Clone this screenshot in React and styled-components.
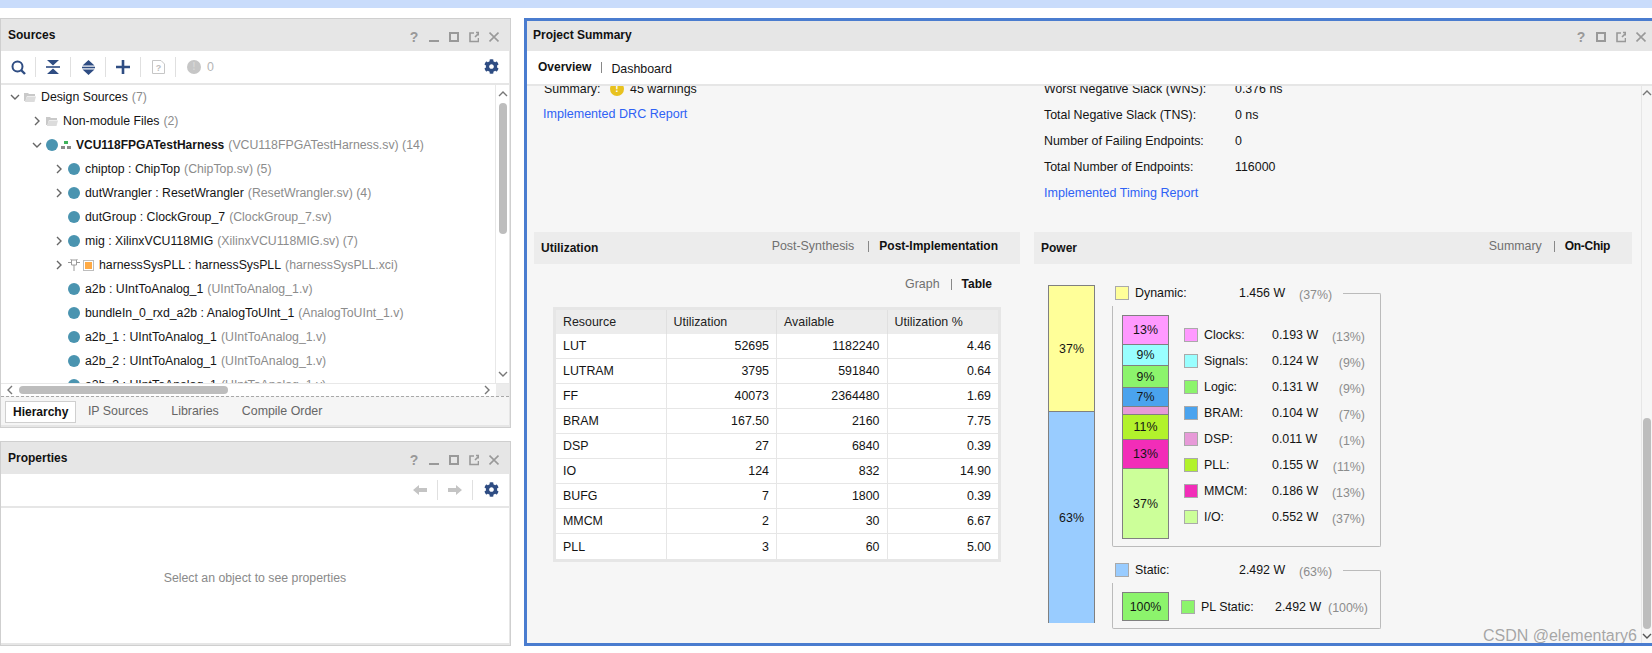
import React from 'react';
import styled, { createGlobalStyle } from 'styled-components';
import { FaCog } from 'react-icons/fa';

const NAVY = '#2f4d83';
const GREY_TEXT = '#8c8c8c';

const sourceRows = [
  { level: 0, open: true, icon: 'folder', name: 'Design Sources', note: '(7)' },
  { level: 1, arrow: true, icon: 'folder', name: 'Non-module Files', note: '(2)' },
  { level: 1, open: true, icon: 'top', name: 'VCU118FPGATestHarness', note: '(VCU118FPGATestHarness.sv) (14)', bold: true },
  { level: 2, arrow: true, icon: 'dot', name: 'chiptop : ChipTop', note: '(ChipTop.sv) (5)' },
  { level: 2, arrow: true, icon: 'dot', name: 'dutWrangler : ResetWrangler', note: '(ResetWrangler.sv) (4)' },
  { level: 2, icon: 'dot', name: 'dutGroup : ClockGroup_7', note: '(ClockGroup_7.sv)' },
  { level: 2, arrow: true, icon: 'dot', name: 'mig : XilinxVCU118MIG', note: '(XilinxVCU118MIG.sv) (7)' },
  { level: 2, arrow: true, icon: 'ip', name: 'harnessSysPLL : harnessSysPLL', note: '(harnessSysPLL.xci)' },
  { level: 2, icon: 'dot', name: 'a2b : UIntToAnalog_1', note: '(UIntToAnalog_1.v)' },
  { level: 2, icon: 'dot', name: 'bundleIn_0_rxd_a2b : AnalogToUInt_1', note: '(AnalogToUInt_1.v)' },
  { level: 2, icon: 'dot', name: 'a2b_1 : UIntToAnalog_1', note: '(UIntToAnalog_1.v)' },
  { level: 2, icon: 'dot', name: 'a2b_2 : UIntToAnalog_1', note: '(UIntToAnalog_1.v)' },
  { level: 2, icon: 'dot', name: 'a2b_3 : UIntToAnalog_1', note: '(UIntToAnalog_1.v)' },
];

const timingRows = [
  ['Worst Negative Slack (WNS):', '0.376 ns'],
  ['Total Negative Slack (TNS):', '0 ns'],
  ['Number of Failing Endpoints:', '0'],
  ['Total Number of Endpoints:', '116000'],
];

const utilRows = [
  ['LUT', '52695', '1182240', '4.46'],
  ['LUTRAM', '3795', '591840', '0.64'],
  ['FF', '40073', '2364480', '1.69'],
  ['BRAM', '167.50', '2160', '7.75'],
  ['DSP', '27', '6840', '0.39'],
  ['IO', '124', '832', '14.90'],
  ['BUFG', '7', '1800', '0.39'],
  ['MMCM', '2', '30', '6.67'],
  ['PLL', '3', '60', '5.00'],
];

const dynamicParts = [
  { label: 'Clocks:', value: '0.193 W', pct: '13%', color: '#ff99ff', height: 29 },
  { label: 'Signals:', value: '0.124 W', pct: '9%', color: '#99ffff', height: 21 },
  { label: 'Logic:', value: '0.131 W', pct: '9%', color: '#8cf46c', height: 22 },
  { label: 'BRAM:', value: '0.104 W', pct: '7%', color: '#4aa3ee', height: 19 },
  { label: 'DSP:', value: '0.011 W', pct: '1%', color: '#e79ad8', height: 8, hideText: true },
  { label: 'PLL:', value: '0.155 W', pct: '11%', color: '#b2f22c', height: 25 },
  { label: 'MMCM:', value: '0.186 W', pct: '13%', color: '#f22db8', height: 29 },
  { label: 'I/O:', value: '0.552 W', pct: '37%', color: '#ccff99', height: 69 },
];

function Chevron({ dir = 'right', color = '#666', size = 10 }) {
  const points = {
    right: '3,1 7,5 3,9',
    left: '7,1 3,5 7,9',
    down: '1,3 5,7 9,3',
    up: '1,7 5,3 9,7',
  };
  return (
    <svg width={size} height={size} viewBox="0 0 10 10">
      <polyline points={points[dir]} fill="none" stroke={color} strokeWidth="1.4" />
    </svg>
  );
}

function WindowControls({ hideMinimize }) {
  return (
    <Controls>
      <Help>?</Help>
      {!hideMinimize && (
        <svg width="10" height="12" viewBox="0 0 10 12">
          <rect x="0" y="9" width="10" height="2" fill="#999" />
        </svg>
      )}
      <svg width="10" height="12" viewBox="0 0 10 12">
        <rect x="1" y="2" width="8" height="8" fill="none" stroke="#999" strokeWidth="2" />
      </svg>
      <svg width="10" height="12" viewBox="0 0 10 12">
        <path d="M5 2H1V10.500H9.500V7M6 6L10 2M7 1.500H10V4.500" fill="none" stroke="#999" strokeWidth="1.600" />
      </svg>
      <svg width="10" height="12" viewBox="0 0 10 12">
        <path d="M0.500 1.500L9.500 10.500M9.500 1.500L0.500 10.500" fill="none" stroke="#999" strokeWidth="1.700" />
      </svg>
    </Controls>
  );
}

function TreeIcon({ kind }) {
  if (kind === 'folder') {
    return (
      <IconSlot>
        <svg width="12" height="10" viewBox="0 0 12 10">
          <path d="M0 1H4L5 2H11V4H3L1.500 9H0Z" fill="#c9c9c9" />
          <path d="M3 4.500H12L10.500 10H0.800Z" fill="#dcdcdc" />
        </svg>
      </IconSlot>
    );
  }
  if (kind === 'top') {
    return (
      <>
        <Dot />
        <HierIcon>
          <svg width="10" height="8" viewBox="0 0 10 8">
            <rect x="3" y="0" width="4" height="3" fill="#3fb35c" />
            <rect x="0" y="5" width="4" height="3" fill="#8a8a8a" />
            <rect x="6" y="5" width="4" height="3" fill="#8a8a8a" />
          </svg>
        </HierIcon>
      </>
    );
  }
  if (kind === 'ip') {
    return (
      <>
        <IconSlot>
          <svg width="12" height="12" viewBox="0 0 12 12">
            <path d="M0 3.500H3M9 3.500H12M3.500 1H8.500V6H3.500ZM6 6V12M3 0V1M9 0V1" fill="none" stroke="#9a9a9a" strokeWidth="1" />
          </svg>
        </IconSlot>
        <IpBox />
      </>
    );
  }
  return <Dot />;
}

function TreeRow({ row }) {
  return (
    <Row $level={row.level}>
      <ArrowSlot>
        {row.open && <Chevron dir="down" />}
        {row.arrow && <Chevron dir="right" />}
      </ArrowSlot>
      <TreeIcon kind={row.icon} />
      <RowName $bold={row.bold}>{row.name}</RowName>
      <RowNote>{row.note}</RowNote>
    </Row>
  );
}

function SourcesPanel() {
  return (
    <Panel $height={410}>
      <PanelHeader>
        <PanelTitle>Sources</PanelTitle>
        <WindowControls />
      </PanelHeader>
      <Toolbar>
        <Tool>
          <svg width="15" height="15" viewBox="0 0 15 15">
            <circle cx="6.500" cy="6.500" r="5" fill="none" stroke={NAVY} strokeWidth="2" />
            <path d="M10 10L14 14" stroke={NAVY} strokeWidth="2.400" />
          </svg>
        </Tool>
        <Tool>
          <svg width="14" height="14" viewBox="0 0 14 14">
            <path d="M1 0H13L7 5.500ZM1 14H13L7 8.500Z" fill={NAVY} />
            <rect x="0" y="6.200" width="14" height="1.600" fill={NAVY} />
          </svg>
        </Tool>
        <Tool>
          <svg width="13" height="15" viewBox="0 0 13 15">
            <path d="M6.500 0L12.500 5.500H0.500ZM6.500 15L12.500 9.500H0.500Z" fill={NAVY} />
            <rect x="0" y="6.700" width="13" height="1.600" fill={NAVY} />
          </svg>
        </Tool>
        <Tool>
          <svg width="14" height="14" viewBox="0 0 14 14">
            <path d="M5.700 0H8.300V5.700H14V8.300H8.300V14H5.700V8.300H0V5.700H5.700Z" fill={NAVY} />
          </svg>
        </Tool>
        <Tool>
          <svg width="13" height="14" viewBox="0 0 13 14">
            <path d="M0.500 0.500H9L12.500 4V13.500H0.500Z" fill="none" stroke="#c6c6c6" />
            <text x="6.500" y="10.500" fontSize="9" fontFamily="Liberation Sans" fontWeight="700" fill="#bdbdbd" textAnchor="middle">?</text>
          </svg>
        </Tool>
        <IssueCount>
          <IssueDot>!</IssueDot>
          0
        </IssueCount>
        <ToolSpring />
        <GearTool><FaCog size={15} color={NAVY} /></GearTool>
      </Toolbar>
      <Rule />
      <TreeArea>
        <TreeList>
          {sourceRows.map(row => (
            <TreeRow key={row.name} row={row} />
          ))}
        </TreeList>
        <VerticalBar>
          <ArrowCell><Chevron dir="up" color="#777" /></ArrowCell>
          <TreeThumb />
          <Spring />
          <ArrowCell><Chevron dir="down" color="#777" /></ArrowCell>
        </VerticalBar>
      </TreeArea>
      <HorizontalBar>
        <HorizontalEnd><Chevron dir="left" color="#777" /></HorizontalEnd>
        <HorizontalThumb />
        <Spring />
        <HorizontalEnd><Chevron dir="right" color="#777" /></HorizontalEnd>
        <ScrollCorner />
      </HorizontalBar>
      <TabStrip>
        <SideTab $active>Hierarchy</SideTab>
        <SideTab>IP Sources</SideTab>
        <SideTab>Libraries</SideTab>
        <SideTab>Compile Order</SideTab>
      </TabStrip>
    </Panel>
  );
}

function PropertiesPanel() {
  return (
    <Panel $height={205}>
      <PanelHeader>
        <PanelTitle>Properties</PanelTitle>
        <WindowControls />
      </PanelHeader>
      <NavToolbar>
        <NavTool>
          <svg width="14" height="10" viewBox="0 0 14 10">
            <path d="M0 5L6 0V3H14V7H6V10Z" fill="#c4c4c4" />
          </svg>
        </NavTool>
        <NavTool>
          <svg width="14" height="10" viewBox="0 0 14 10">
            <path d="M14 5L8 0V3H0V7H8V10Z" fill="#c4c4c4" />
          </svg>
        </NavTool>
        <GearTool><FaCog size={15} color={NAVY} /></GearTool>
      </NavToolbar>
      <Rule />
      <EmptyState>Select an object to see properties</EmptyState>
    </Panel>
  );
}

function PowerGroup({ name, value, pct, color, children }) {
  return (
    <PowerBlock>
      <GroupHead>
        <GroupSwatch $color={color} />
        <GroupLabel>{name}</GroupLabel>
        <GroupValue>{value}</GroupValue>
        <GroupPct>({pct})</GroupPct>
        <GroupLine />
      </GroupHead>
      <GroupBox>{children}</GroupBox>
    </PowerBlock>
  );
}

function PowerChart() {
  return (
    <ChartWrap>
      <TotalBar>
        <TotalPart $color="#ffff99" $height={126}>37%</TotalPart>
        <TotalPart $color="#99ccff" $height={211}>63%</TotalPart>
      </TotalBar>
      <PowerColumn>
        <PowerGroup name="Dynamic:" value="1.456 W" pct="37%" color="#ffff99">
          <StackBar>
            {dynamicParts.map(part => (
              <StackPart key={part.label} $color={part.color} $height={part.height}>
                {!part.hideText && part.pct}
              </StackPart>
            ))}
          </StackBar>
          <LegendGrid>
            {dynamicParts.map(part => (
              <React.Fragment key={part.label}>
                <LegendSwatch $color={part.color} />
                <span>{part.label}</span>
                <LegendValue>{part.value}</LegendValue>
                <LegendPct>({part.pct})</LegendPct>
              </React.Fragment>
            ))}
          </LegendGrid>
        </PowerGroup>
        <PowerGroup name="Static:" value="2.492 W" pct="63%" color="#99ccff">
          <StaticBar>100%</StaticBar>
          <StaticLegend>
            <LegendSwatch $color="#8cf46c" />
            <StaticLabel>PL Static:</StaticLabel>
            <StaticValue>2.492 W</StaticValue>
            <StaticPct>(100%)</StaticPct>
          </StaticLegend>
        </PowerGroup>
      </PowerColumn>
    </ChartWrap>
  );
}

function ProjectSummary() {
  return (
    <MainPanel>
      <MainHeader>
        <PanelTitle>Project Summary</PanelTitle>
        <WindowControls hideMinimize />
      </MainHeader>
      <ViewTabs>
        <OverviewTab>Overview</OverviewTab>
        <TabDivider />
        <DashboardTab>Dashboard</DashboardTab>
      </ViewTabs>
      <Rule />
      <MainBody>
        <SummaryScroll>
          <SummaryGrid>
            <TopBlock $inset={9}>
              <StatusRow>
                <StatusLabel>Summary:</StatusLabel>
                <WarnDot>!</WarnDot>
                <span>45 warnings</span>
              </StatusRow>
              <ReportLink>Implemented DRC Report</ReportLink>
            </TopBlock>
            <TopBlock $inset={10}>
              {timingRows.map(([label, value]) => (
                <TimingRow key={label}>
                  <TimingLabel>{label}</TimingLabel>
                  <span>{value}</span>
                </TimingRow>
              ))}
              <ReportLink>Implemented Timing Report</ReportLink>
            </TopBlock>
            <div>
              <SectionHead>
                <SectionTitle>Utilization</SectionTitle>
                <SectionSwitch>
                  <SwitchItem>Post-Synthesis</SwitchItem>
                  <SwitchDivider $left={14} />
                  <SwitchItem $active>Post-Implementation</SwitchItem>
                </SectionSwitch>
              </SectionHead>
              <GraphSwitch>
                <SwitchItem>Graph</SwitchItem>
                <SwitchDivider $left={11} />
                <SwitchItem $active>Table</SwitchItem>
              </GraphSwitch>
              <UtilTable>
                <thead>
                  <tr>
                    <HeadCell>Resource</HeadCell>
                    <HeadCell>Utilization</HeadCell>
                    <HeadCell>Available</HeadCell>
                    <HeadCell>Utilization %</HeadCell>
                  </tr>
                </thead>
                <tbody>
                  {utilRows.map(row => (
                    <tr key={row[0]}>
                      <BodyCell>{row[0]}</BodyCell>
                      <BodyCell $right>{row[1]}</BodyCell>
                      <BodyCell $right>{row[2]}</BodyCell>
                      <BodyCell $right>{row[3]}</BodyCell>
                    </tr>
                  ))}
                </tbody>
              </UtilTable>
            </div>
            <div>
              <SectionHead>
                <SectionTitle>Power</SectionTitle>
                <SectionSwitch>
                  <SwitchItem>Summary</SwitchItem>
                  <SwitchDivider $left={12} />
                  <SwitchItem $active $tight>On-Chip</SwitchItem>
                </SectionSwitch>
              </SectionHead>
              <PowerChart />
            </div>
          </SummaryGrid>
        </SummaryScroll>
        <MainScrollBar>
          <MainArrow><Chevron dir="up" color="#777" /></MainArrow>
          <Spring />
          <MainThumb />
          <MainArrow><Chevron dir="down" color="#555" /></MainArrow>
        </MainScrollBar>
      </MainBody>
      <Watermark>CSDN @elementary6</Watermark>
    </MainPanel>
  );
}

export default function App() {
  return (
    <>
      <GlobalStyle />
      <TopStrip />
      <Workspace>
        <LeftColumn>
          <SourcesPanel />
          <PropertiesPanel />
        </LeftColumn>
        <ProjectSummary />
      </Workspace>
    </>
  );
}

const GlobalStyle = createGlobalStyle`
  html, body {
    margin: 0;
    padding: 0;
    background: #fff;
  }

  body {
    font-family: "Liberation Sans", Arial, sans-serif;
    font-size: 12.4px;
    color: #141414;
    overflow: hidden;
  }

  * {
    box-sizing: border-box;
  }
`;

const TopStrip = styled.div`
  height: 8px;
  background: #c9dcfb;
`;

const Workspace = styled.div`
  display: flex;
  gap: 13px;
  padding-top: 10px;
`;

const LeftColumn = styled.div`
  display: flex;
  flex-direction: column;
  gap: 13px;
  width: 511px;
  flex: none;
`;

const Panel = styled.section`
  display: flex;
  flex-direction: column;
  height: ${props => props.$height}px;
  padding: 0 1px 2px 0;
  background: #e6e6e6;
  border: 1px solid #cfcfcf;
  overflow: hidden;
`;

const PanelHeader = styled.header`
  display: flex;
  align-items: center;
  justify-content: space-between;
  flex: none;
  height: 32px;
  padding: 0 10px 0 7px;
`;

const PanelTitle = styled.h2`
  margin: 0;
  font-size: 12px;
  font-weight: 700;
  color: #111;
`;

const Controls = styled.div`
  display: flex;
  align-items: center;
  gap: 10px;
  margin-top: 4px;
`;

const Help = styled.span`
  width: 10px;
  font-size: 14px;
  font-weight: 700;
  line-height: 12px;
  text-align: center;
  color: #999;
`;

const Toolbar = styled.div`
  display: flex;
  align-items: center;
  flex: none;
  height: 32px;
  background: #fff;
`;

const Tool = styled.div`
  display: flex;
  align-items: center;
  justify-content: center;
  width: 35px;
  height: 20px;
  border-right: 1px solid #e0e0e0;
`;

const ToolSpring = styled.div`
  flex: 1;
`;

const GearTool = styled.div`
  display: flex;
  width: 36px;
  height: 16px;
  padding-left: 11px;
`;

const IssueCount = styled.div`
  display: flex;
  align-items: center;
  gap: 6px;
  margin-left: 11px;
  color: #b5b5b5;
`;

const IssueDot = styled.span`
  width: 14px;
  height: 14px;
  border-radius: 50%;
  background: #c6c6c6;
  color: #d6d6d6;
  font-size: 10px;
  font-weight: 700;
  line-height: 14px;
  text-align: center;
`;

const Rule = styled.div`
  flex: none;
  height: 2px;
  background: #e6e6e6;
`;

const TreeArea = styled.div`
  display: flex;
  flex: none;
  height: 298px;
  background: #fff;
`;

const TreeList = styled.div`
  flex: 1;
  min-width: 0;
  overflow: hidden;
`;

const Row = styled.div`
  display: flex;
  align-items: center;
  height: 24px;
  padding-left: ${props => 9 + props.$level * 22}px;
  font-size: 12.3px;
  white-space: nowrap;
`;

const ArrowSlot = styled.span`
  display: flex;
  width: 14px;
  flex: none;
`;

const IconSlot = styled.span`
  display: flex;
  align-items: center;
  width: 12px;
  flex: none;
`;

const Dot = styled.span`
  width: 12px;
  height: 12px;
  flex: none;
  border-radius: 50%;
  background: #4a94b0;
`;

const HierIcon = styled.span`
  display: flex;
  margin-left: 3px;
`;

const IpBox = styled.span`
  width: 11px;
  height: 11px;
  margin-left: 3px;
  flex: none;
  background: #ffaa44;
  border: 1px solid #bdbdbd;
  outline: 1px solid #fff;
  outline-offset: -2px;
`;

const RowName = styled.span`
  margin-left: 5px;
  font-weight: ${props => (props.$bold ? 700 : 400)};
  font-size: ${props => (props.$bold ? '12px' : 'inherit')};
`;

const RowNote = styled.span`
  margin-left: 4px;
  color: ${GREY_TEXT};
`;

const VerticalBar = styled.div`
  display: flex;
  flex-direction: column;
  align-items: center;
  width: 14px;
  flex: none;
  border-left: 1px solid #e8e8e8;
`;

const ArrowCell = styled.div`
  display: flex;
  align-items: center;
  justify-content: center;
  height: 18px;
  flex: none;
`;

const TreeThumb = styled.div`
  width: 8px;
  height: 131px;
  border-radius: 4px;
  background: #bdbdbd;
`;

const Spring = styled.div`
  flex: 1;
`;

const HorizontalBar = styled.div`
  display: flex;
  align-items: center;
  flex: none;
  height: 13px;
  background: #fff;
  border-top: 1px solid #e8e8e8;
`;

const HorizontalEnd = styled.div`
  display: flex;
  justify-content: center;
  width: 18px;
  flex: none;
`;

const HorizontalThumb = styled.div`
  width: 209px;
  height: 8px;
  border-radius: 4px;
  background: #bdbdbd;
`;

const ScrollCorner = styled.div`
  align-self: stretch;
  width: 13px;
  flex: none;
  background: #ececec;
`;

const TabStrip = styled.nav`
  display: flex;
  align-items: center;
  flex: 1;
  padding: 1px 0 0 4px;
  background: #f5f5f5;
  border-top: 1px dashed #a8a8a8;
`;

const SideTab = styled.div`
  padding: 0 ${props => (props.$active ? '7px' : '11.5px')};
  height: 22px;
  line-height: 20px;
  font-size: ${props => (props.$active ? '12px' : '12.4px')};
  font-weight: ${props => (props.$active ? 700 : 400)};
  color: ${props => (props.$active ? '#111' : '#666')};
  background: ${props => (props.$active ? '#fff' : 'transparent')};
  border: ${props => (props.$active ? '1px solid #cfcfcf' : '0')};
`;

const NavToolbar = styled.div`
  display: flex;
  align-items: center;
  justify-content: flex-end;
  flex: none;
  height: 32px;
  background: #fff;
`;

const NavTool = styled.div`
  display: flex;
  align-items: center;
  justify-content: center;
  width: 35px;
  height: 20px;
  border-right: 1px solid #e0e0e0;
`;

const EmptyState = styled.div`
  display: flex;
  align-items: center;
  justify-content: center;
  flex: 1;
  padding-top: 5px;
  font-size: 12.3px;
  background: #fff;
  color: #8a8a8a;
`;

const MainPanel = styled.main`
  position: relative;
  display: flex;
  flex-direction: column;
  flex: 1;
  height: 628px;
  border: 3px solid #4a7ccf;
  border-right: 0;
  overflow: hidden;
`;

const MainHeader = styled.header`
  display: flex;
  align-items: center;
  justify-content: space-between;
  flex: none;
  height: 30px;
  padding: 0 6px 2px 6px;
  background: #e6e6e6;
`;

const ViewTabs = styled.nav`
  display: flex;
  align-items: center;
  flex: none;
  height: 33px;
  padding-left: 11px;
  background: #fff;
`;

const OverviewTab = styled.span`
  margin-top: -1px;
  font-size: 12px;
  font-weight: 700;
`;

const DashboardTab = styled.span`
  margin: 2px 0 0 -1px;
`;

const TabDivider = styled.span`
  width: 1px;
  height: 11px;
  margin: 0 10px;
  background: #888;
`;

const MainBody = styled.div`
  display: flex;
  flex: 1;
  min-height: 0;
  background: #f6f6f6;
`;

const SummaryScroll = styled.div`
  flex: 1;
  min-width: 0;
  overflow: hidden;
`;

const SummaryGrid = styled.div`
  display: grid;
  grid-template-columns: 486px 598px;
  grid-template-rows: 156px auto;
  column-gap: 14px;
  margin-top: -10px;
  padding: 0 9px 0 7px;
`;

const TopBlock = styled.div`
  padding-left: ${props => props.$inset}px;
`;

const StatusRow = styled.div`
  display: flex;
  align-items: center;
  height: 25px;
  margin-left: 1px;
`;

const StatusLabel = styled.span`
  width: 66px;
`;

const WarnDot = styled.span`
  width: 14px;
  height: 14px;
  margin-right: 6px;
  border-radius: 50%;
  background: #e8c21f;
  color: #fff;
  font-size: 10px;
  font-weight: 700;
  line-height: 14px;
  text-align: center;
`;

const TimingRow = styled.div`
  display: flex;
  align-items: center;
  height: 26px;
`;

const TimingLabel = styled.span`
  width: 191px;
`;

const ReportLink = styled.a`
  display: flex;
  align-items: center;
  height: 26px;
  font-size: 12.55px;
  color: #2f62f5;
`;

const SectionHead = styled.div`
  display: flex;
  align-items: center;
  justify-content: space-between;
  height: 32px;
  padding: 0 22px 0 7px;
  background: #ececec;
`;

const SectionTitle = styled.h3`
  margin: 0;
  font-size: 12px;
  font-weight: 700;
`;

const SectionSwitch = styled.div`
  display: flex;
  align-items: center;
  margin-top: -4px;
`;

const GraphSwitch = styled.div`
  display: flex;
  align-items: center;
  justify-content: flex-end;
  height: 20px;
  margin-top: 10px;
  padding-right: 28px;
`;

const SwitchItem = styled.span`
  font-size: ${props => (props.$active ? '12px' : '12.4px')};
  font-weight: ${props => (props.$active ? 700 : 400)};
  letter-spacing: ${props => (props.$tight ? '-0.3px' : '0')};
  color: ${props => (props.$active ? '#111' : '#707070')};
`;

const SwitchDivider = styled.span`
  width: 1px;
  height: 11px;
  margin: 0 10px 0 ${props => props.$left}px;
  background: #888;
`;

const UtilTable = styled.table`
  width: 448px;
  margin: 13px 0 0 19px;
  table-layout: fixed;
  border-collapse: separate;
  border-spacing: 0;
  border: 3px solid #e6e6e6;
  background: #fff;
`;

const HeadCell = styled.th`
  height: 24px;
  padding: 0 7px;
  font-size: 12.4px;
  font-weight: 400;
  text-align: left;
  background: #ececec;
  border-right: 1px solid #e0e0e0;
  color: #222;

  &:last-child {
    border-right: 0;
  }
`;

const BodyCell = styled.td`
  height: 25px;
  padding: 0 7px;
  text-align: ${props => (props.$right ? 'right' : 'left')};
  border-right: 1px solid #e6e6e6;
  border-bottom: 1px solid #e6e6e6;

  &:last-child {
    border-right: 0;
  }

  tr:last-child & {
    border-bottom: 0;
  }
`;

const ChartWrap = styled.div`
  display: flex;
  gap: 17px;
  margin-top: 21px;
  padding-left: 14px;
`;

const TotalBar = styled.div`
  display: flex;
  flex-direction: column;
  width: 47px;
  height: 338px;
  flex: none;
  border: 1px solid #808080;
`;

const TotalPart = styled.div`
  display: flex;
  align-items: center;
  justify-content: center;
  height: ${props => props.$height}px;
  flex: none;
  background: ${props => props.$color};
  border-bottom: 1px solid #808080;

  &:last-child {
    border-bottom: 0;
  }
`;

const PowerColumn = styled.div`
  display: flex;
  flex-direction: column;
  gap: 15px;
  width: 269px;
`;

const PowerBlock = styled.div`
  display: flex;
  flex-direction: column;
`;

const GroupHead = styled.div`
  display: flex;
  align-items: flex-start;
  height: 21px;
  padding-left: 3px;
`;

const GroupSwatch = styled.span`
  width: 14px;
  height: 14px;
  margin: 1px 6px 0 0;
  flex: none;
  background: ${props => props.$color};
  border: 1px solid #aaa;
`;

const GroupLabel = styled.span`
  width: 104px;
  flex: none;
  line-height: 16px;
`;

const GroupValue = styled.span`
  width: 60px;
  flex: none;
  line-height: 16px;
`;

const GroupPct = styled.span`
  width: 44px;
  flex: none;
  margin-top: 3px;
  line-height: 15px;
  color: ${GREY_TEXT};
`;

const GroupLine = styled.span`
  flex: 1;
  align-self: stretch;
  margin-top: 8px;
  border-top: 1px solid #bbb;
  border-right: 1px solid #bbb;
  border-top-right-radius: 2px;
`;

const GroupBox = styled.div`
  display: flex;
  align-items: flex-start;
  padding: 9px 0 7px 9px;
  border: 1px solid #bbb;
  border-top: 0;
  border-radius: 0 0 2px 2px;
`;

const StackBar = styled.div`
  display: flex;
  flex-direction: column;
  width: 47px;
  flex: none;
  border: 1px solid #808080;
`;

const StackPart = styled.div`
  display: flex;
  align-items: center;
  justify-content: center;
  height: ${props => props.$height}px;
  background: ${props => props.$color};
  border-bottom: 1px solid #808080;

  &:last-child {
    border-bottom: 0;
  }
`;

const LegendGrid = styled.div`
  display: grid;
  grid-template-columns: 20px 68px 50px 43px;
  grid-auto-rows: 26px;
  align-items: center;
  margin: 7px 0 0 15px;
`;

const LegendSwatch = styled.span`
  width: 14px;
  height: 14px;
  background: ${props => props.$color};
  border: 1px solid #aaa;
`;

const LegendValue = styled.span`
  white-space: nowrap;
`;

const LegendPct = styled.span`
  margin-top: 3px;
  color: ${GREY_TEXT};
  text-align: right;
`;

const StaticBar = styled.div`
  display: flex;
  align-items: center;
  justify-content: center;
  width: 47px;
  height: 29px;
  flex: none;
  background: #8cf46c;
  border: 1px solid #808080;
`;

const StaticLegend = styled.div`
  display: flex;
  align-items: center;
  height: 29px;
  margin-left: 12px;
  white-space: nowrap;
`;

const StaticLabel = styled.span`
  width: 74px;
  margin-left: 6px;
`;

const StaticValue = styled.span`
  width: 53px;
`;

const StaticPct = styled.span`
  margin-top: 3px;
  color: ${GREY_TEXT};
`;

const MainScrollBar = styled.div`
  display: flex;
  flex-direction: column;
  align-items: center;
  width: 11px;
  flex: none;
  border-left: 1px solid #e6e6e6;
`;

const MainArrow = styled.div`
  display: flex;
  align-items: center;
  justify-content: center;
  height: 14px;
  flex: none;
`;

const MainThumb = styled.div`
  width: 8px;
  height: 211px;
  border-radius: 4px;
  background: #bdbdbd;
`;

const Watermark = styled.div`
  position: absolute;
  right: 15px;
  bottom: -2px;
  font-size: 16px;
  color: rgba(130, 130, 130, 0.7);
`;
